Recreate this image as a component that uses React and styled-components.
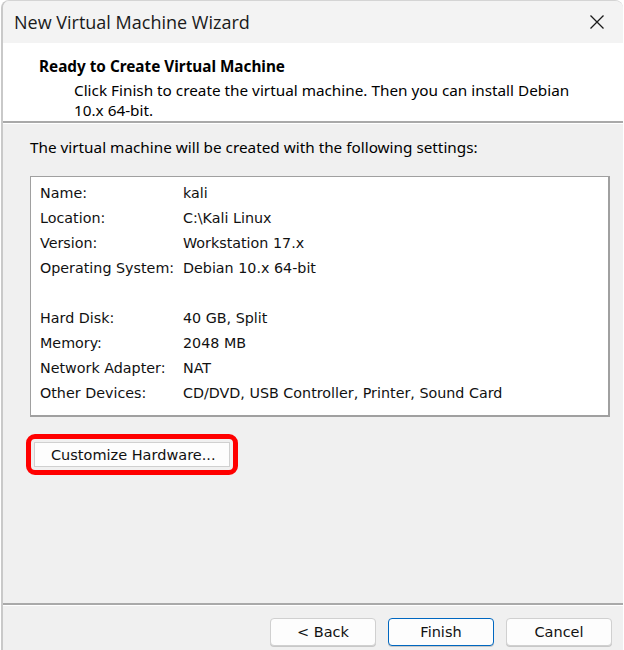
import React from 'react';
import styled, { createGlobalStyle } from 'styled-components';

const GlobalStyle = createGlobalStyle`
    html, body {
        margin: 0;
        padding: 0;
        background: #ffffff;
    }
    body {
        font-family: "Open Sans", "Noto Sans", sans-serif;
        color: #000;
    }
`;

const Window = styled.div`
    width: 620px;
    height: 660px;
    margin-left: 1px;
    border-left: 2px solid #c9c9c9;
    border-top: 1px solid #d4d4d4;
    border-radius: 8px 8px 0 0;
    background: #f0f0f0;
    display: flex;
    flex-direction: column;
    overflow: hidden;
`;

const TitleBar = styled.div`
    height: 42px;
    background: #f3f3f3;
    display: flex;
    align-items: center;
    justify-content: space-between;
    padding: 0 14px 0 11px;
`;

const Title = styled.div`
    font-family: "Open Sans", sans-serif;
    font-size: 18px;
    color: #1a1a1a;
`;

const CloseIcon = styled.svg`
    width: 16px;
    height: 16px;
    margin-right: 4px;
`;

const Header = styled.div`
    background: #fff;
    height: 80px;
    padding: 12px 0 0 36px;
    box-sizing: border-box;
    border-bottom: 2px solid #a9a9a9;
    box-shadow: 0 1px 0 #ffffff;
`;

const HeaderTitle = styled.div`
    font-family: "Noto Sans", sans-serif;
    font-weight: 700;
    font-size: 15.3px;
    line-height: 22px;
    margin-bottom: 3px;
`;

const HeaderText = styled.div`
    font-family: "Noto Sans", sans-serif;
    font-size: 15.3px;
    line-height: 20px;
    padding-left: 35px;
    width: 520px;
`;

const Body = styled.div`
    flex: 1;
    padding: 12px 16px 0 27px;
    display: flex;
    flex-direction: column;
`;

const Intro = styled.div`
    font-family: "Noto Sans", sans-serif;
    font-size: 15.3px;
    line-height: 22px;
    margin-top: 1px;
`;

const SettingsBox = styled.div`
    margin-top: 18px;
    width: 580px;
    height: 241px;
    box-sizing: border-box;
    background: #fff;
    border: 1px solid #a0a0a0;
    border-right: 2px solid #a0a0a0;
    border-bottom: 2px solid #a0a0a0;
    padding: 3px 0 0 9px;
    display: grid;
    grid-template-columns: 143px 1fr;
    grid-auto-rows: 25px;
    align-items: center;
    font-family: "DejaVu Sans", sans-serif;
    font-size: 14.3px;
    color: #111;
`;

const Cell = styled.div`
    white-space: nowrap;
`;

const Highlight = styled.div`
    margin-top: 17px;
    margin-left: -4px;
    width: 212px;
    height: 41px;
    box-sizing: border-box;
    border: 5px solid #ff0000;
    border-radius: 9px;
    padding: 3px;
    display: flex;
`;

const Button = styled.button`
    flex: ${p => (p.$fill ? 1 : 'none')};
    width: ${p => (p.$fill ? 'auto' : '106px')};
    height: ${p => (p.$fill ? 'auto' : '28px')};
    background: #fdfdfd;
    border: 1px solid ${p => (p.$primary ? '#0067c0' : '#d0d0d0')};
    border-radius: ${p => (p.$fill ? '0' : '4px')};
    font-family: "DejaVu Sans", sans-serif;
    font-size: 14.5px;
    color: #111;
    text-align: ${p => (p.$fill ? 'left' : 'center')};
    padding: ${p => (p.$fill ? '0 0 0 16px' : '0')};
    box-shadow: ${p => (p.$fill ? 'none' : '0 1px 0 #c8c8c8')};
`;

const Footer = styled.div`
    border-top: 2px solid #a9a9a9;
    box-shadow: inset 0 1px 0 #ffffff;
    height: 58px;
    display: flex;
    justify-content: flex-end;
    align-items: flex-start;
    gap: 12px;
    padding: 13px 11px 0 0;
    box-sizing: border-box;
`;

const settings = [
    ['Name:', 'kali'],
    ['Location:', 'C:\\Kali Linux'],
    ['Version:', 'Workstation 17.x'],
    ['Operating System:', 'Debian 10.x 64-bit'],
    ['', ''],
    ['Hard Disk:', '40 GB, Split'],
    ['Memory:', '2048 MB'],
    ['Network Adapter:', 'NAT'],
    ['Other Devices:', 'CD/DVD, USB Controller, Printer, Sound Card'],
];

const App = () => {
    return (
        <>
            <GlobalStyle />
            <Window>
                <TitleBar>
                    <Title>New Virtual Machine Wizard</Title>
                    <CloseIcon viewBox="0 0 16 16">
                        <path d="M1.5 1.5 L14.5 14.5 M14.5 1.5 L1.5 14.5" stroke="#1a1a1a" strokeWidth="1.3" fill="none" />
                    </CloseIcon>
                </TitleBar>
                <Header>
                    <HeaderTitle>Ready to Create Virtual Machine</HeaderTitle>
                    <HeaderText>
                        Click Finish to create the virtual machine. Then you can install Debian 10.x 64-bit.
                    </HeaderText>
                </Header>
                <Body>
                    <Intro>The virtual machine will be created with the following settings:</Intro>
                    <SettingsBox>
                        {settings.map(([label, value], i) => (
                            <React.Fragment key={i}>
                                <Cell>{label}</Cell>
                                <Cell>{value}</Cell>
                            </React.Fragment>
                        ))}
                    </SettingsBox>
                    <Highlight>
                        <Button $fill>Customize Hardware...</Button>
                    </Highlight>
                </Body>
                <Footer>
                    <Button>&lt; Back</Button>
                    <Button $primary>Finish</Button>
                    <Button>Cancel</Button>
                </Footer>
            </Window>
        </>
    );
};

export default App;
